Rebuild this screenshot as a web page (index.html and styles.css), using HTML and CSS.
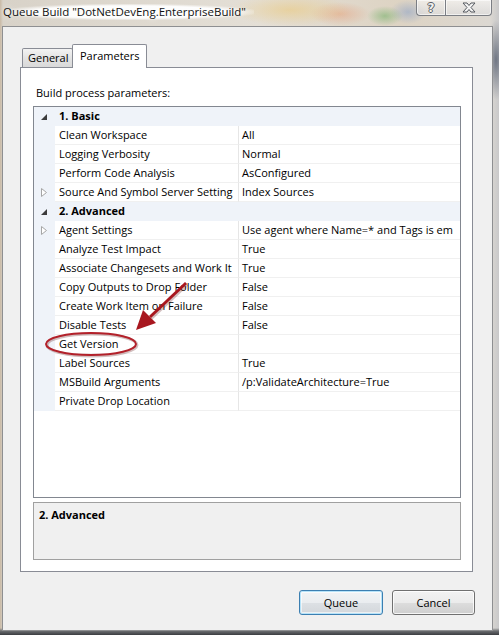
FILE: index.html
```html
<!DOCTYPE html>
<html lang="en">
<head>
    <meta charset="UTF-8">
    <meta name="viewport" content="width=device-width, initial-scale=1.0">
    <title>Queue Build</title>
    <link rel="stylesheet" href="styles.css">
</head>
<body>
    <div class="window">
        <div class="titlebar">
            <span class="title">Queue Build "DotNetDevEng.EnterpriseBuild"</span>
            <div class="caption-buttons">
                <span class="cap-btn help">?</span>
                <span class="cap-btn close">
                    <svg width="18" height="11" viewBox="0 0 18 11">
                        <path d="M3 1 H7 L9 3.5 L11 1 H15 L11 5.5 L15 10 H11 L9 7.5 L7 10 H3 L7 5.5 Z" fill="#f4f4f4" stroke="#55595f" stroke-width="1"/>
                    </svg>
                </span>
            </div>
        </div>

        <div class="client">
            <div class="tabctl">
                <div class="tabs">
                    <div class="tab">General</div>
                    <div class="tab active">Parameters</div>
                </div>
                <div class="tab-panel">
                    <div class="caption">Build process parameters:</div>
                    <div class="grid">
                        <div class="row cat">
                            <span class="gutter"><svg class="expanded" width="6" height="6" viewBox="0 0 6 6"><path d="M6 0 V6 H0 Z" fill="#3c3c3c"/></svg></span>
                            <span class="cat-name">1. Basic</span>
                        </div>
                        <div class="row"><span class="gutter"></span><span class="name">Clean Workspace</span><span class="value">All</span></div>
                        <div class="row"><span class="gutter"></span><span class="name">Logging Verbosity</span><span class="value">Normal</span></div>
                        <div class="row"><span class="gutter"></span><span class="name">Perform Code Analysis</span><span class="value">AsConfigured</span></div>
                        <div class="row">
                            <span class="gutter"><svg width="6" height="9" viewBox="0 0 6 9"><path d="M0.5 0.5 L5.5 4.5 L0.5 8.5 Z" fill="#fff" stroke="#a6a6a6"/></svg></span>
                            <span class="name">Source And Symbol Server Setting</span><span class="value">Index Sources</span>
                        </div>
                        <div class="row cat">
                            <span class="gutter"><svg class="expanded" width="6" height="6" viewBox="0 0 6 6"><path d="M6 0 V6 H0 Z" fill="#3c3c3c"/></svg></span>
                            <span class="cat-name">2. Advanced</span>
                        </div>
                        <div class="row">
                            <span class="gutter"><svg width="6" height="9" viewBox="0 0 6 9"><path d="M0.5 0.5 L5.5 4.5 L0.5 8.5 Z" fill="#fff" stroke="#a6a6a6"/></svg></span>
                            <span class="name">Agent Settings</span><span class="value">Use agent where Name=* and Tags is em</span>
                        </div>
                        <div class="row"><span class="gutter"></span><span class="name">Analyze Test Impact</span><span class="value">True</span></div>
                        <div class="row"><span class="gutter"></span><span class="name">Associate Changesets and Work It</span><span class="value">True</span></div>
                        <div class="row"><span class="gutter"></span><span class="name">Copy Outputs to Drop Folder</span><span class="value">False</span></div>
                        <div class="row"><span class="gutter"></span><span class="name">Create Work Item on Failure</span><span class="value">False</span></div>
                        <div class="row"><span class="gutter"></span><span class="name">Disable Tests</span><span class="value">False</span></div>
                        <div class="row"><span class="gutter"></span><span class="name">Get Version</span><span class="value"></span></div>
                        <div class="row"><span class="gutter"></span><span class="name">Label Sources</span><span class="value">True</span></div>
                        <div class="row"><span class="gutter"></span><span class="name">MSBuild Arguments</span><span class="value">/p:ValidateArchitecture=True</span></div>
                        <div class="row"><span class="gutter"></span><span class="name">Private Drop Location</span><span class="value"></span></div>
                    </div>
                    <div class="desc">2. Advanced</div>
                </div>
            </div>
            <div class="buttons">
                <button class="btn default">Queue</button>
                <button class="btn">Cancel</button>
            </div>
        </div>

        <!-- red callout drawn on top of the dialog -->
        <svg class="markup" width="499" height="635" viewBox="0 0 499 635">
            <ellipse cx="91" cy="344" rx="45" ry="11" fill="none" stroke="rgba(80,0,0,0.25)" stroke-width="3" transform="translate(1 1)"/>
            <ellipse cx="91" cy="344" rx="45" ry="11" fill="none" stroke="#b3212a" stroke-width="2"/>
            <line x1="186" y1="283" x2="150" y2="317" stroke="rgba(80,0,0,0.25)" stroke-width="4" transform="translate(1 1)"/>
            <line x1="186" y1="283" x2="150" y2="317" stroke="#a8171f" stroke-width="3"/>
            <polygon points="136,330 143,310 156,323" fill="#a8171f"/>
        </svg>
    </div>
</body>
</html>
```

FILE: styles.css
```css
body {
    margin: 0;
    padding: 0;
    font-family: 'Open Sans', 'Noto Sans', sans-serif;
    font-size: 11px;
    color: #000;
    background-color: #4a4d52;
}

.window {
    position: relative;
    width: 499px;
    height: 635px;
    display: flex;
    flex-direction: column;
    overflow: hidden;
    /* aero glass frame */
    background:
        radial-gradient(ellipse 10px 40px at 496px 60px, rgba(70, 80, 100, 0.7), transparent),
        linear-gradient(to bottom, transparent 628px, #6b6d70 631px, #3a3c40 635px),
        radial-gradient(ellipse 60px 16px at 290px 10px, rgba(235, 200, 120, 0.55), transparent),
        radial-gradient(ellipse 30px 12px at 340px 14px, rgba(230, 150, 110, 0.45), transparent),
        radial-gradient(ellipse 18px 10px at 385px 16px, rgba(100, 170, 90, 0.5), transparent),
        radial-gradient(ellipse 18px 12px at 408px 12px, rgba(120, 150, 200, 0.45), transparent),
        linear-gradient(to right, #c9b9a4 0, #d8d2c8 3px, #e4dfd6 260px, #ddd3c3 400px, #dcd8d2 490px, #c9c9ca 499px);
}

.titlebar {
    height: 26px;
    display: flex;
    align-items: flex-start;
    flex-shrink: 0;
}

.title {
    margin: 4px 0 0 3px;
    font-size: 11.5px;
    line-height: 16px;
    color: #111;
    background: radial-gradient(ellipse at center, rgba(255, 255, 255, 0.95) 55%, rgba(255, 255, 255, 0) 75%);
    padding: 0 8px 0 0;
    text-shadow: 0 0 6px #fff;
}

.caption-buttons {
    display: flex;
    margin-left: auto;
    margin-right: 7px;
}

.cap-btn {
    height: 15px;
    display: flex;
    align-items: center;
    justify-content: center;
    border: 1px solid #7b7e84;
    border-top: none;
    background: linear-gradient(to bottom, rgba(255, 255, 255, 0.55), rgba(220, 220, 222, 0.6));
    box-shadow: inset 0 0 0 1px rgba(255, 255, 255, 0.6);
}

.cap-btn.help {
    width: 28px;
    border-radius: 0 0 0 4px;
    border-right: none;
    font-family: 'DejaVu Sans', sans-serif;
    font-weight: bold;
    font-size: 12px;
    color: #f2f2f2;
    text-shadow: -1px 0 #5a5e64, 1px 0 #5a5e64, 0 -1px #5a5e64, 0 1px #5a5e64;
}

.cap-btn.close {
    width: 45px;
    border-radius: 0 0 4px 0;
}

.client {
    flex: 1;
    margin: 0 6px 4px 2px;
    border: 1px solid #8e8f91;
    background-color: #f0f0f0;
    padding: 17px 17px 15px 17px;
    display: flex;
    flex-direction: column;
}

.tabctl {
    flex: 1;
    display: flex;
    flex-direction: column;
    margin-right: 2px;
}

.tabs {
    display: flex;
    align-items: flex-end;
    height: 23px;
    padding-left: 2px;
}

.tab {
    height: 19px;
    line-height: 18px;
    box-sizing: border-box;
    width: 51px;
    padding-left: 5px;
    border: 1px solid #898c95;
    border-bottom: none;
    border-radius: 2px 2px 0 0;
    background: linear-gradient(to bottom, #f3f3f3, #e3e3e3 50%, #d9d9d9);
}

.tab.active {
    height: 24px;
    width: 75px;
    margin-left: -1px;
    padding-left: 7px;
    line-height: 21px;
    background: #fff;
    position: relative;
    z-index: 1;
    margin-bottom: -1px;
}

.tab-panel {
    flex: 1;
    border: 1px solid #898c95;
    background-color: #fff;
    padding: 17px 11px 11px 12px;
    display: flex;
    flex-direction: column;
}

.caption {
    line-height: 16px;
    padding-left: 3px;
    margin-bottom: 5px;
}

.grid {
    flex: 1;
    border: 1px solid #828790;
    background-color: #fff;
    overflow: hidden;
}

.row {
    display: flex;
    height: 19px;
    line-height: 18px;
    white-space: nowrap;
}

.gutter {
    width: 21px;
    flex-shrink: 0;
    background-color: #eff3f9;
    display: flex;
    align-items: center;
    justify-content: center;
    padding-right: 2px;
    box-sizing: border-box;
}

.gutter svg.expanded {
    margin-top: 1px;
}

.name {
    width: 184px;
    flex-shrink: 0;
    box-sizing: border-box;
    padding-left: 4px;
    overflow: hidden;
    border-bottom: 1px solid #f0f0f0;
    border-right: 1px solid #e6e6e6;
}

.value {
    flex: 1;
    padding-left: 3px;
    overflow: hidden;
    border-bottom: 1px solid #f0f0f0;
}

.row.cat {
    background-color: #eff3f9;
}

.cat-name {
    padding-left: 4px;
    font-weight: bold;
}

.desc {
    height: 58px;
    box-sizing: border-box;
    margin-top: 4px;
    border: 1px solid #a0a0a0;
    background-color: #f0f0f0;
    padding: 4px 5px;
    font-weight: bold;
    line-height: 16px;
}

.buttons {
    display: flex;
    justify-content: flex-end;
    gap: 9px;
    margin-top: 18px;
    height: 25px;
}

.btn {
    width: 83px;
    height: 25px;
    font-family: 'Open Sans', 'Noto Sans', sans-serif;
    font-size: 11px;
    color: #000;
    border: 1px solid #707070;
    border-radius: 3px;
    background: linear-gradient(to bottom, #f2f2f2 0, #ebebeb 50%, #dddddd 50%, #cfcfcf 100%);
    box-shadow: inset 0 0 0 1px rgba(255, 255, 255, 0.8);
    padding: 0;
}

.btn.default {
    width: 84px;
    border-color: #3c7fb1;
    box-shadow: inset 0 0 0 1px #b6e3f9, inset 0 0 0 2px rgba(255, 255, 255, 0.6);
    background: linear-gradient(to bottom, #f1f3f5 0, #eaedf0 50%, #dde1e5 50%, #d3d7db 100%);
}

.markup {
    position: absolute;
    left: 0;
    top: 0;
    pointer-events: none;
}
```
